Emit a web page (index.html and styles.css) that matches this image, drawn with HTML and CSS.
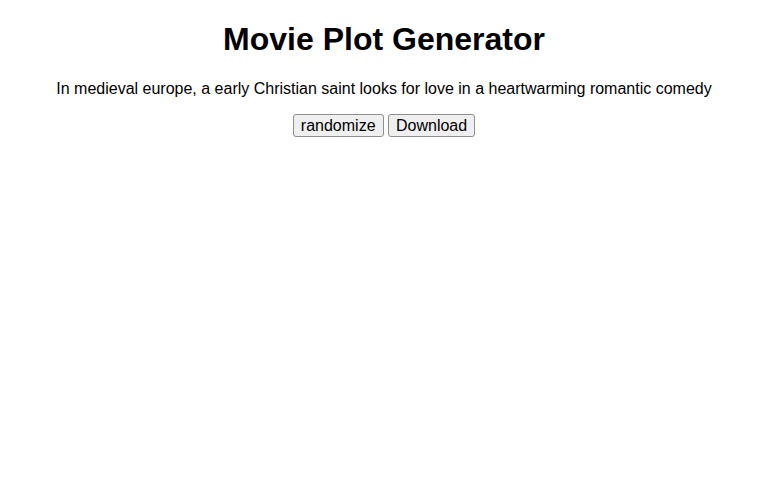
FILE: index.html
```html
<!DOCTYPE html>
<html>
<head>
<meta charset="utf-8">
<link rel="stylesheet" href="styles.css">
</head>
<body class="page">
<div class="app">
  <h1 class="title">Movie Plot Generator</h1>
  <p class="plot">In medieval europe, a early Christian saint looks for love in a heartwarming romantic comedy</p>
  <div class="actions">
    <button class="btn">randomize</button> <button class="btn">Download</button>
  </div>
</div>
</body>
</html>
```
FILE: styles.css
```css
html, body {
  margin: 0;
  padding: 0;
  background: #fff;
}
.page {
  font-family: "Liberation Sans", Arial, sans-serif;
  color: #000;
}
.app {
  text-align: center;
}
.title {
  font-size: 32px;
  font-weight: bold;
  margin: 21.44px 0;
}
.plot {
  font-size: 16px;
  margin: 16px 0;
}
.actions {
  font-size: 16px;
}
.btn {
  font-family: "Liberation Sans", Arial, sans-serif;
  font-size: 16px;
  line-height: 18px;
  color: #000;
  background: #efefef;
  border: 1px solid #8f8f8f;
  border-radius: 3px;
  padding: 2px 7px 1px;
  margin: 0;
}
```
